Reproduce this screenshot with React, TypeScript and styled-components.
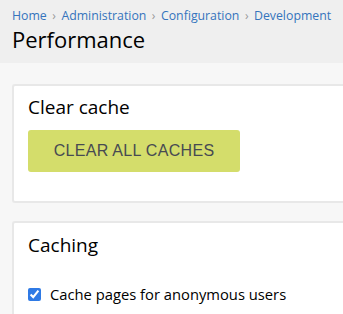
import React from 'react';
import styled, { createGlobalStyle } from 'styled-components';

const GlobalStyle = createGlobalStyle`
  html, body {
    margin: 0;
    padding: 0;
    background: #f7f7f7;
    font-family: 'Open Sans', 'Noto Sans', sans-serif;
    color: #000;
  }
`;

const Header = styled.header`
  background: #efefef;
  padding: 6px 12px 0;
  height: 57px;
`;

const Breadcrumb = styled.nav`
  display: flex;
  align-items: center;
  gap: 4px;
  font-size: 12.3px;
  line-height: 20px;
  white-space: nowrap;
`;

const Crumb = styled.a`
  color: #3574bd;
  text-decoration: none;
`;

const Sep = styled.span`
  color: #999;
  font-size: 12px;
  padding: 0 1.5px;
`;

const Title = styled.h1`
  margin: 0;
  font-size: 22px;
  font-weight: 400;
  line-height: 26px;
`;

const Main = styled.main`
  padding: 21px 0 0 12px;
  display: flex;
  flex-direction: column;
  gap: 18px;
`;

const Card = styled.section<{ $pad: string }>`
  background: #fff;
  border: 2px solid #e8e8e8;
  border-right: none;
  border-radius: 3px 0 0 3px;
  padding: ${({ $pad }) => $pad};
`;

const CardTitle = styled.h2`
  margin: 0;
  font-size: 19px;
  font-weight: 400;
  line-height: 26px;
`;

const Button = styled.button`
  margin-top: 10px;
  width: 212px;
  height: 42px;
  border: none;
  border-radius: 3px;
  background: #d4dd6b;
  color: #474a52;
  font-family: 'Liberation Sans', Arial, sans-serif;
  font-size: 16px;
  letter-spacing: 0.3px;
  cursor: pointer;
`;

const CheckRow = styled.label`
  display: flex;
  align-items: center;
  gap: 9px;
  margin-top: 26px;
  font-size: 14.75px;
  line-height: 20px;
`;

const Check = styled.input`
  margin: 0;
  width: 13px;
  height: 13px;
  accent-color: #2f7ae5;
`;

export default function App() {
  return (
    <>
      <GlobalStyle />
      <Header>
        <Breadcrumb>
          <Crumb href="#">Home</Crumb>
          <Sep>›</Sep>
          <Crumb href="#">Administration</Crumb>
          <Sep>›</Sep>
          <Crumb href="#">Configuration</Crumb>
          <Sep>›</Sep>
          <Crumb href="#">Development</Crumb>
        </Breadcrumb>
        <Title>Performance</Title>
      </Header>
      <Main>
        <Card $pad="8px 14px 29px">
          <CardTitle>Clear cache</CardTitle>
          <Button>CLEAR ALL CACHES</Button>
        </Card>
        <Card $pad="9px 14px 12px">
          <CardTitle>Caching</CardTitle>
          <CheckRow>
            <Check type="checkbox" defaultChecked />
            Cache pages for anonymous users
          </CheckRow>
        </Card>
      </Main>
    </>
  );
}
